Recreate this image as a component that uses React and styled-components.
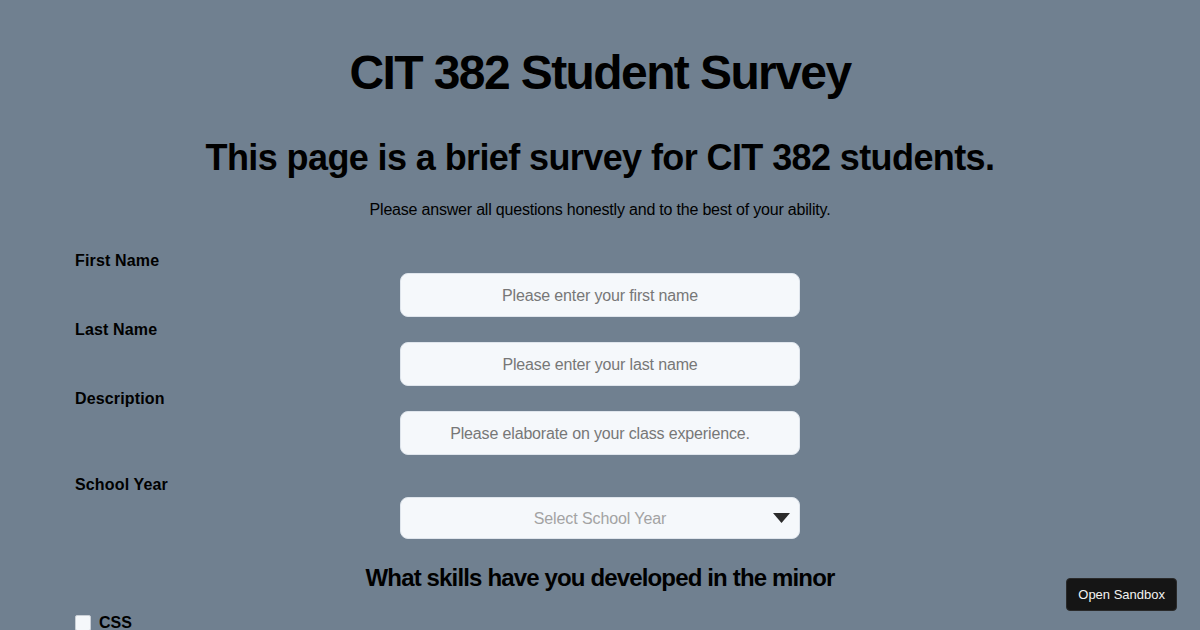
import React from "react";
import styled, { createGlobalStyle } from "styled-components";

const Global = createGlobalStyle`
  html, body { margin: 0; padding: 0; }
  body {
    background: #708090;
    font-family: "Liberation Sans", Arial, Helvetica, sans-serif;
    color: #000;
    min-height: 630px;
    overflow: hidden;
  }
`;

const Page = styled.main`
  display: flex;
  flex-direction: column;
  padding-top: 45px;
`;

const Title = styled.h1`
  margin: 0;
  text-align: center;
  font-size: 48px;
  line-height: 56px;
  font-weight: 700;
  letter-spacing: -1.6px;
`;

const Subtitle = styled.h2`
  margin: 36px 0 0;
  text-align: center;
  font-size: 36px;
  line-height: 42px;
  font-weight: 700;
  letter-spacing: -0.6px;
`;

const Lead = styled.p`
  margin: 22px 0 0;
  text-align: center;
  font-size: 16px;
  line-height: 18px;
  letter-spacing: -0.2px;
`;

const Form = styled.form`
  display: flex;
  flex-direction: column;
  margin-top: 33px;
`;

const Field = styled.div`
  display: flex;
  flex-direction: column;
  margin-bottom: ${(p) => p.$after}px;
`;

const Label = styled.label`
  padding-left: 75px;
  font-size: 16px;
  line-height: 18px;
  font-weight: 700;
  letter-spacing: 0.15px;
`;

const TextInput = styled.input`
  box-sizing: border-box;
  align-self: center;
  width: 400px;
  height: 44px;
  margin-top: 3px;
  padding: 1px 0 0;
  border: 1px solid #dfe5ec;
  border-radius: 8px;
  background: #f5f8fb;
  font-family: inherit;
  font-size: 16px;
  letter-spacing: -0.15px;
  text-align: center;
  outline: none;
  &::placeholder { color: #777; }
`;

const SelectBox = styled.div`
  position: relative;
  box-sizing: border-box;
  align-self: center;
  width: 400px;
  height: 42px;
  margin-top: 3px;
  padding-top: 2px;
  border: 1px solid #dfe5ec;
  border-radius: 8px;
  background: #f5f8fb;
  display: flex;
  align-items: center;
  justify-content: center;
  font-size: 16px;
  letter-spacing: -0.1px;
  color: #a3a3a3;
`;

const Arrow = styled.svg`
  position: absolute;
  right: 9px;
  top: 15px;
`;

const SkillsHeading = styled.h3`
  margin: 25px 0 0;
  text-align: center;
  font-size: 24px;
  line-height: 28px;
  font-weight: 700;
  letter-spacing: -0.85px;
`;

const CheckRow = styled.label`
  display: flex;
  align-items: center;
  gap: 8px;
  margin-top: 22px;
  padding-left: 75px;
  font-size: 16px;
  line-height: 18px;
  font-weight: 700;
`;

const Check = styled.input`
  appearance: none;
  margin: 0;
  width: 16px;
  height: 16px;
  box-sizing: border-box;
  border: 1px solid #c9cfd6;
  border-radius: 2px;
  background: #f5f8fb;
`;

const SandboxButton = styled.button`
  position: fixed;
  right: 23px;
  bottom: 19px;
  height: 33px;
  padding: 0 11px;
  border: 1px solid #2a2a2a;
  border-radius: 4px;
  background: #151515;
  color: #f2f2f2;
  font-family: "Liberation Sans", Arial, sans-serif;
  font-size: 13px;
`;

export default function App() {
  return (
    <>
      <Global />
      <Page>
        <Title>CIT 382 Student Survey</Title>
        <Subtitle>This page is a brief survey for CIT 382 students.</Subtitle>
        <Lead>Please answer all questions honestly and to the best of your ability.</Lead>
        <Form>
          <Field $after={4}>
            <Label>First Name</Label>
            <TextInput placeholder="Please enter your first name" />
          </Field>
          <Field $after={4}>
            <Label>Last Name</Label>
            <TextInput placeholder="Please enter your last name" />
          </Field>
          <Field $after={21}>
            <Label>Description</Label>
            <TextInput placeholder="Please elaborate on your class experience." />
          </Field>
          <Field $after={0}>
            <Label>School Year</Label>
            <SelectBox>
              Select School Year
              <Arrow width="17" height="10" viewBox="0 0 17 10">
                <path d="M0 0 H17 L8.5 10 Z" fill="#2b2b2b" />
              </Arrow>
            </SelectBox>
          </Field>
          <SkillsHeading>What skills have you developed in the minor</SkillsHeading>
          <CheckRow>
            <Check type="checkbox" />
            CSS
          </CheckRow>
        </Form>
      </Page>
      <SandboxButton>Open Sandbox</SandboxButton>
    </>
  );
}
